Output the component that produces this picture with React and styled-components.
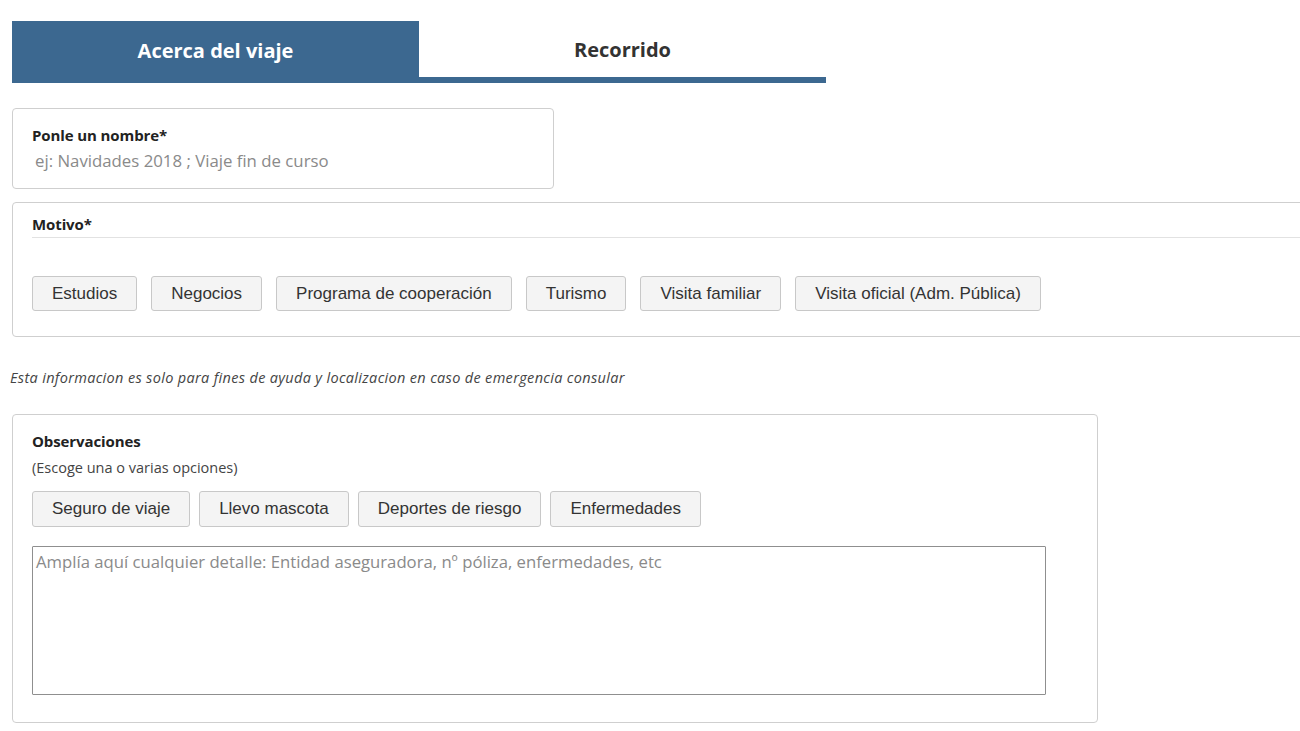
import React from "react";
import styled, { createGlobalStyle } from "styled-components";

const Global = createGlobalStyle`
  html, body { margin: 0; padding: 0; background: #fff; overflow: hidden; }
  body { font-family: "Open Sans", "Liberation Sans", sans-serif; color: #333; }
  * { box-sizing: border-box; }
`;

const Page = styled.div`
  padding: 21px 0 0 12px;
  width: 1340px;
`;

const Tabs = styled.div`
  display: flex;
  width: 814px;
`;

const Tab = styled.div`
  flex: 1;
  height: 62px;
  display: flex;
  align-items: center;
  justify-content: center;
  font-family: "Open Sans", sans-serif;
  font-weight: 700;
  font-size: 20px;
  padding-bottom: ${(p) => (p.$active ? "4px" : "0")};
  color: ${(p) => (p.$active ? "#fff" : "#333")};
  background: ${(p) => (p.$active ? "#3c6890" : "#fff")};
  border-bottom: ${(p) => (p.$active ? "none" : "6px solid #3c6890")};
`;

const Card = styled.div`
  width: ${(p) => p.$w};
  border: 1px solid #cfcfcf;
  border-radius: 4px;
  padding: ${(p) => p.$pad};
  margin-top: ${(p) => p.$mt};
  height: ${(p) => p.$h};
`;

const Label = styled.div`
  font-family: "Open Sans", sans-serif;
  font-weight: 700;
  font-size: 15px;
  line-height: 20px;
  color: #222;
  letter-spacing: -0.1px;
`;

const Placeholder = styled.div`
  margin-top: 5px;
  padding-left: 3px;
  font-size: 16.8px;
  line-height: 22px;
  color: #8a8a8a;
`;

const Divider = styled.div`
  border-bottom: 1px solid #e2e2e2;
  padding-bottom: 3px;
`;

const ButtonRow = styled.div`
  display: flex;
  gap: ${(p) => p.$gap};
  margin-top: ${(p) => p.$mt};
`;

const Option = styled.button`
  font-family: "Liberation Sans", Arial, sans-serif;
  font-size: 17px;
  color: #333;
  background: #f4f4f4;
  border: 1px solid #c8c8c8;
  border-radius: 3px;
  height: ${(p) => p.$h};
  padding: 0 19px;
  margin: 0;
  cursor: pointer;
`;

const Note = styled.div`
  margin: 31px 0 0 -2px;
  font-style: italic;
  font-size: 14.5px;
  line-height: 20px;
  color: #444;
  letter-spacing: 0.33px;
`;

const Sub = styled.div`
  margin-top: 7px;
  font-size: 14.5px;
  line-height: 20px;
  color: #444;
`;

const Area = styled.textarea`
  display: block;
  margin-top: 19px;
  width: 1014px;
  height: 149px;
  resize: none;
  border: 1px solid #8f8f8f;
  border-radius: 1px;
  padding: 4px 3px;
  font-family: "Open Sans", sans-serif;
  font-size: 16.7px;
  line-height: 22px;
  color: #333;
  &::placeholder { color: #8a8a8a; }
  outline: none;
`;

const motivos = [
  "Estudios",
  "Negocios",
  "Programa de cooperación",
  "Turismo",
  "Visita familiar",
  "Visita oficial (Adm. Pública)",
];

const obs = ["Seguro de viaje", "Llevo mascota", "Deportes de riesgo", "Enfermedades"];

export default function App() {
  return (
    <>
      <Global />
      <Page>
        <Tabs>
          <Tab $active>Acerca del viaje</Tab>
          <Tab>Recorrido</Tab>
        </Tabs>

        <Card $w="542px" $h="81px" $mt="25px" $pad="16px 19px">
          <Label>Ponle un nombre*</Label>
          <Placeholder>ej: Navidades 2018 ; Viaje fin de curso</Placeholder>
        </Card>

        <Card $w="1320px" $h="135px" $mt="13px" $pad="11px 19px">
          <Divider>
            <Label>Motivo*</Label>
          </Divider>
          <ButtonRow $gap="14px" $mt="38px">
            {motivos.map((m) => (
              <Option key={m} $h="35px">{m}</Option>
            ))}
          </ButtonRow>
        </Card>

        <Note>Esta informacion es solo para fines de ayuda y localizacion en caso de emergencia consular</Note>

        <Card $w="1086px" $h="309px" $mt="26px" $pad="16px 19px">
          <Label>Observaciones</Label>
          <Sub>(Escoge una o varias opciones)</Sub>
          <ButtonRow $gap="9px" $mt="13px">
            {obs.map((m) => (
              <Option key={m} $h="36px">{m}</Option>
            ))}
          </ButtonRow>
          <Area placeholder="Amplía aquí cualquier detalle: Entidad aseguradora, nº póliza, enfermedades, etc" />
        </Card>
      </Page>
    </>
  );
}
